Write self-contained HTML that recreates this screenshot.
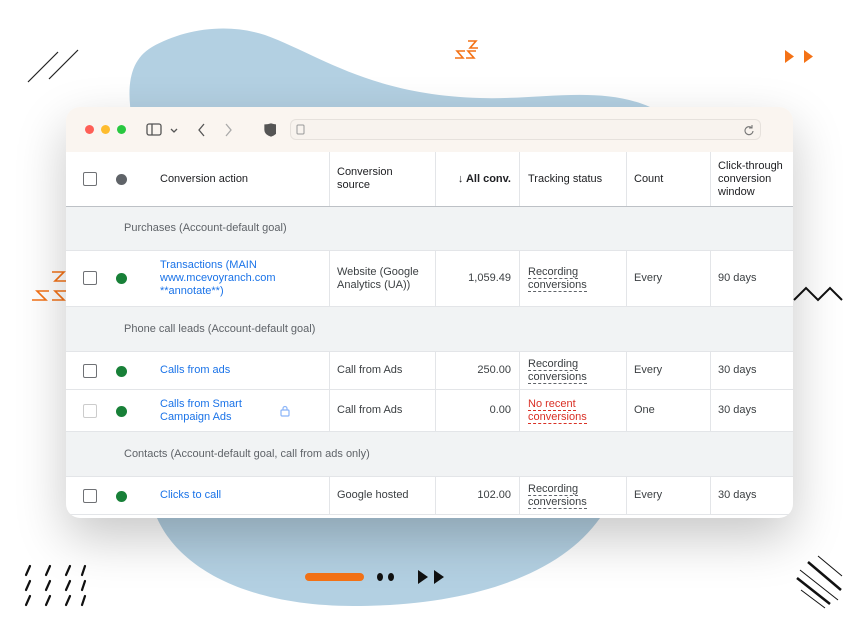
<!DOCTYPE html>
<html><head><meta charset="utf-8"><style>
*{margin:0;padding:0;box-sizing:border-box}
body{width:860px;height:628px;background:#fff;position:relative;overflow:hidden;font-family:"Liberation Sans",Arial,sans-serif}
svg.bg{position:absolute;left:0;top:0}
.win{position:absolute;left:66px;top:107px;width:727px;height:411px;border-radius:14px;background:#fff;overflow:hidden;box-shadow:0 20px 50px rgba(0,0,0,.22)}
.tb{height:45px;background:#faf5f0;position:relative}
.dot{position:absolute;top:18px;width:9px;height:9px;border-radius:50%}
.url{position:absolute;left:224px;top:12px;width:471px;height:21px;border:1px solid #e6e1dc;border-radius:6px;background:#f8f3ee}
.row{position:absolute;left:0;width:727px;border-bottom:1px solid #e3e5e8;font-size:11px;color:#3c4043}
.grp{background:#f1f3f4;color:#5f6368}
.c{position:absolute;top:0;height:100%;display:flex;align-items:center;line-height:13px}
.b{border-left:1px solid #e3e5e8}
.cb{position:absolute;left:17px;width:14px;height:14px;border:1.5px solid #6f7175;border-radius:2px}
.gd{position:absolute;left:50px;width:11px;height:11px;border-radius:50%;background:#188038}
a{color:#1a73e8;text-decoration:none}
.u{border-bottom:1px dashed #5f6368}
.r{border-bottom:1px dashed #d93025;color:#d93025}
.hd{color:#202124}
</style></head><body>
<svg class="bg" width="860" height="628">
<path d="M132 120 C126 85,130 60,152 47 C182 30,225 22,265 35 C320 55,370 95,480 98 C540 100,600 85,650 107 L650 300 L600 518 C560 575,470 606,353 606 C250 606,180 570,157 518 Z" fill="#b3d0e2"/>
<g stroke="#222" stroke-width="1.2"><line x1="28" y1="82" x2="58" y2="52"/><line x1="49" y1="79" x2="78" y2="50"/></g>
<g stroke="#f47216" stroke-width="1.6" fill="none"><path d="M468 41h8l-6 7h8M455 58h8l-6-7h8M466 58h8l-6-7h8"/>
<path d="M52 272h12l-9 9h12M32 300h14l-9-9h12M52 300h12l-9-9h12"/></g>
<path d="M785 50l9 6.5-9 6.5zM804 50l9 6.5-9 6.5z" fill="#f47216"/>
<path d="M794 300l12-12 12 12 12-12 12 12" stroke="#111" stroke-width="2" fill="none"/>
<g stroke="#111" stroke-width="2.2" stroke-linecap="round"><path d="M26 575l4-9M46 575l4-9M66 575l4-9M82 575l3-9M26 590l4-9M46 590l4-9M66 590l4-9M82 590l3-9M26 605l4-9M46 605l4-9M66 605l4-9M82 605l3-9"/></g>
<g stroke="#111"><line x1="800" y1="570" x2="838" y2="600" stroke-width="1"/><line x1="797" y1="578" x2="830" y2="604" stroke-width="2.5"/><line x1="808" y1="562" x2="841" y2="590" stroke-width="2.5"/><line x1="801" y1="590" x2="825" y2="608" stroke-width="1"/><line x1="818" y1="556" x2="842" y2="576" stroke-width="1"/></g>
<rect x="305" y="573" width="59" height="8" rx="4" fill="#f47216"/>
<ellipse cx="380" cy="577" rx="3" ry="4" fill="#111"/><ellipse cx="391" cy="577" rx="3" ry="4" fill="#111"/>
<path d="M418 570l10 7-10 7zM434 570l10 7-10 7z" fill="#111"/>
</svg>
<div class="win">
<div class="tb">
<div class="dot" style="left:19px;background:#fe5f57"></div><div class="dot" style="left:35px;background:#febc2e"></div><div class="dot" style="left:51px;background:#28c840"></div>
<svg style="position:absolute;left:80px;top:14px" width="130" height="18" fill="none" stroke="#555" stroke-width="1.3"><rect x="1" y="3" width="14" height="11" rx="2"/><line x1="6" y1="3" x2="6" y2="14"/><path d="M25 8l3 3 3-3"/><path d="M58 3l-5 6 5 6"/><path d="M80 3l5 6-5 6" stroke="#aaa"/><path d="M125 3c-3 1-5 1-6 1v5c0 3 3 5 6 6c3-1 6-3 6-6V4c-1 0-3 0-6-1z" fill="#555"/></svg>
<div class="url"><svg style="position:absolute;left:5px;top:4px" width="10" height="12" fill="none" stroke="#999"><rect x="1" y="1" width="7" height="9" rx="1"/></svg>
<svg style="position:absolute;right:5px;top:4px" width="12" height="12" fill="none" stroke="#777" stroke-width="1.1"><path d="M9 4a4 4 0 1 0 1 3"/><path d="M9 1v3h-3"/></svg></div>
</div>
<div class="row hd" style="top:45px;height:55px;border-bottom:1.5px solid #bdc1c6">
<div class="cb" style="top:20px"></div><div class="gd" style="top:22px;background:#5f6368"></div>
<div class="c" style="left:94px">Conversion action</div>
<div class="c b" style="left:263px;width:106px;padding-left:7px">Conversion<br>source</div>
<div class="c b" style="left:369px;width:84px;justify-content:flex-end;padding-right:8px;font-weight:bold">↓ All conv.</div>
<div class="c b" style="left:453px;width:107px;padding-left:8px">Tracking status</div>
<div class="c b" style="left:560px;width:84px;padding-left:7px">Count</div>
<div class="c b" style="left:644px;width:83px;padding-left:7px">Click-through<br>conversion<br>window</div>
</div>
<div class="row grp" style="top:100px;height:44px"><div class="c" style="left:58px">Purchases (Account-default goal)</div></div>
<div class="row" style="top:144px;height:56px">
<div class="cb" style="top:20px"></div><div class="gd" style="top:22px"></div>
<div class="c" style="left:94px"><a>Transactions (MAIN<br>www.mcevoyranch.com<br>**annotate**)</a></div>
<div class="c b" style="left:263px;width:106px;padding-left:7px">Website (Google<br>Analytics (UA))</div>
<div class="c b" style="left:369px;width:84px;justify-content:flex-end;padding-right:8px">1,059.49</div>
<div class="c b" style="left:453px;width:107px;padding-left:8px"><div><span class="u">Recording</span><br><span class="u">conversions</span></div></div>
<div class="c b" style="left:560px;width:84px;padding-left:7px">Every</div>
<div class="c b" style="left:644px;width:83px;padding-left:7px">90 days</div>
</div>
<div class="row grp" style="top:200px;height:45px"><div class="c" style="left:58px">Phone call leads (Account-default goal)</div></div>
<div class="row" style="top:245px;height:38px">
<div class="cb" style="top:12px"></div><div class="gd" style="top:14px"></div>
<div class="c" style="left:94px"><a>Calls from ads</a></div>
<div class="c b" style="left:263px;width:106px;padding-left:7px">Call from Ads</div>
<div class="c b" style="left:369px;width:84px;justify-content:flex-end;padding-right:8px">250.00</div>
<div class="c b" style="left:453px;width:107px;padding-left:8px"><div><span class="u">Recording</span><br><span class="u">conversions</span></div></div>
<div class="c b" style="left:560px;width:84px;padding-left:7px">Every</div>
<div class="c b" style="left:644px;width:83px;padding-left:7px">30 days</div>
</div>
<div class="row" style="top:283px;height:42px">
<div class="cb" style="top:14px;border-color:#ccc"></div><div class="gd" style="top:16px"></div>
<div class="c" style="left:94px"><a>Calls from Smart<br>Campaign Ads</a></div>
<svg style="position:absolute;left:214px;top:15px" width="10" height="12" fill="none" stroke="#8ab4f8" stroke-width="1.2"><rect x="1" y="5" width="8" height="6" rx="1"/><path d="M3 5V3.5a2 2 0 0 1 4 0V5"/></svg>
<div class="c b" style="left:263px;width:106px;padding-left:7px">Call from Ads</div>
<div class="c b" style="left:369px;width:84px;justify-content:flex-end;padding-right:8px">0.00</div>
<div class="c b" style="left:453px;width:107px;padding-left:8px"><div><span class="r">No recent</span><br><span class="r">conversions</span></div></div>
<div class="c b" style="left:560px;width:84px;padding-left:7px">One</div>
<div class="c b" style="left:644px;width:83px;padding-left:7px">30 days</div>
</div>
<div class="row grp" style="top:325px;height:45px"><div class="c" style="left:58px">Contacts (Account-default goal, call from ads only)</div></div>
<div class="row" style="top:370px;height:38px">
<div class="cb" style="top:12px"></div><div class="gd" style="top:14px"></div>
<div class="c" style="left:94px"><a>Clicks to call</a></div>
<div class="c b" style="left:263px;width:106px;padding-left:7px">Google hosted</div>
<div class="c b" style="left:369px;width:84px;justify-content:flex-end;padding-right:8px">102.00</div>
<div class="c b" style="left:453px;width:107px;padding-left:8px"><div><span class="u">Recording</span><br><span class="u">conversions</span></div></div>
<div class="c b" style="left:560px;width:84px;padding-left:7px">Every</div>
<div class="c b" style="left:644px;width:83px;padding-left:7px">30 days</div>
</div>
</div>
</body></html>
